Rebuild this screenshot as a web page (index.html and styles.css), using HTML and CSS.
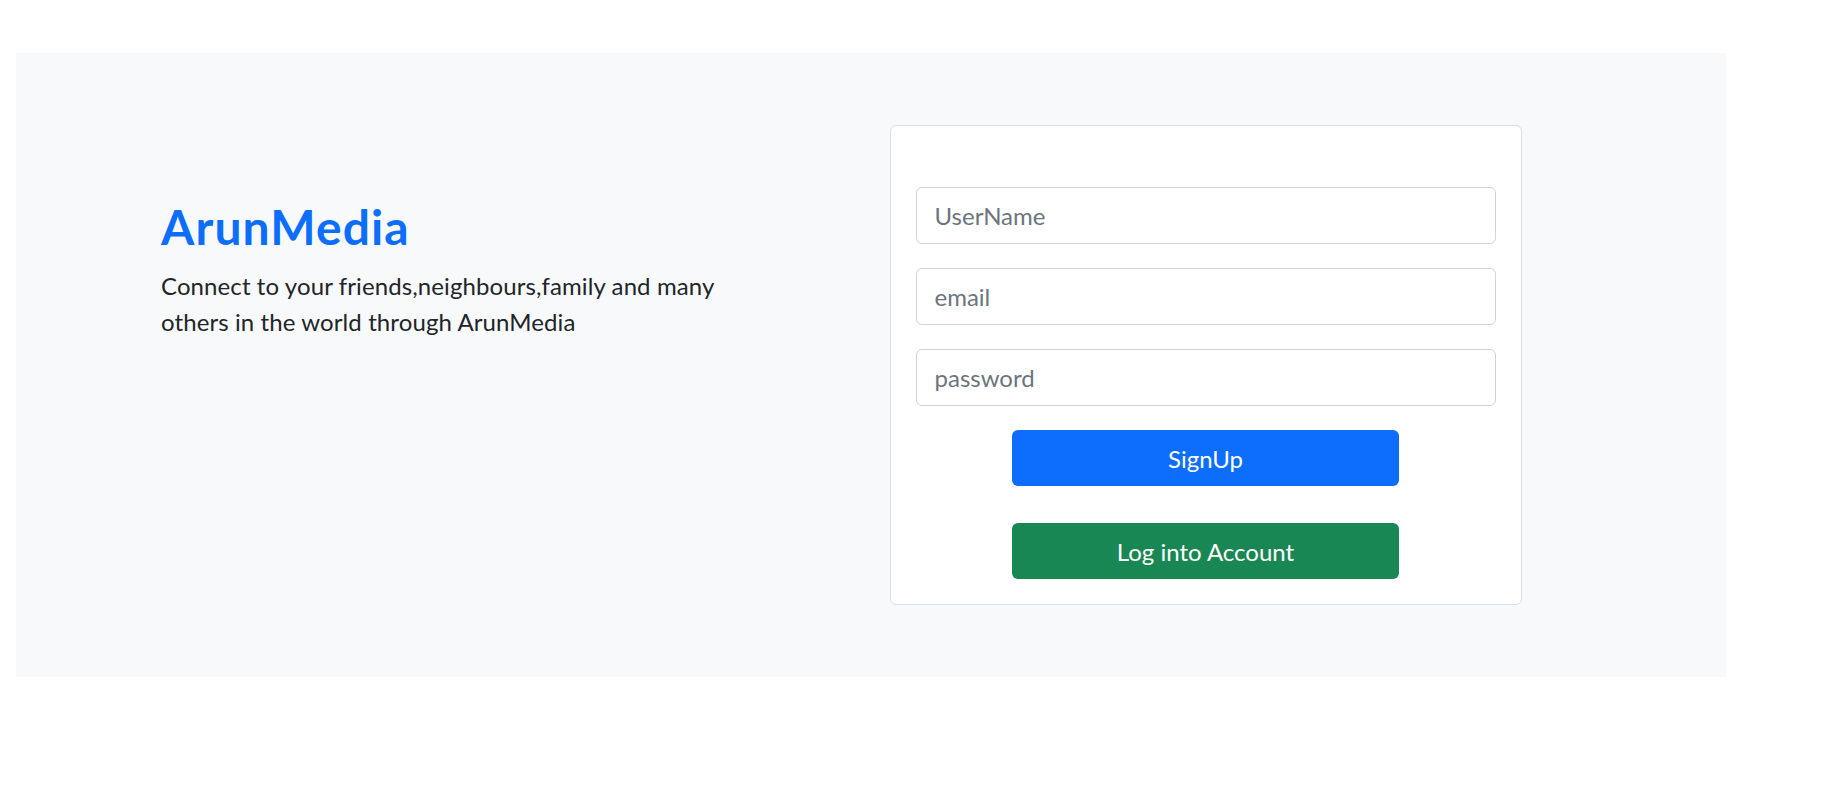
FILE: index.html
```html
<!DOCTYPE html>
<html lang="en">
<head>
<meta charset="utf-8">
<title>ArunMedia</title>
<link rel="stylesheet" href="styles.css">
</head>
<body>
<div class="page">
  <section class="panel">
    <div class="intro">
      <h2 class="brand">ArunMedia</h2>
      <p class="lead">Connect to your friends,neighbours,family and many others in the world through ArunMedia</p>
    </div>
    <form class="card">
      <input class="field" type="text" placeholder="UserName">
      <input class="field" type="email" placeholder="email">
      <input class="field" type="password" placeholder="password">
      <button class="btn btn-primary" type="button">SignUp</button>
      <button class="btn btn-success" type="button">Log into Account</button>
    </form>
  </section>
</div>
</body>
</html>
```

FILE: styles.css
```css
* { box-sizing: border-box; }

body {
  margin: 0;
  background: #ffffff;
  font-family: "Lato", "Noto Sans", sans-serif;
  color: #212529;
}

.page {
  padding: 53px 0 0 16px;
}

.panel {
  width: 1710px;
  background: #f8f9fa;
  padding: 72px 0;
  display: flex;
  align-items: flex-start;
}

.intro {
  width: 873.5px;
  padding: 73px 0 0 145px;
}

.brand {
  margin: 0 0 12px;
  font-size: 48px;
  line-height: 1.2;
  font-weight: 700;
  letter-spacing: 1.1px;
  color: #0d6efd;
}

.lead {
  margin: 0;
  width: 600px;
  font-size: 24px;
  line-height: 36px;
  letter-spacing: 0.1px;
  color: #212529;
}

.card {
  width: 632px;
  background: #ffffff;
  border: 1px solid #dcdee0;
  border-radius: 6px;
  padding: 61px 25px 25px;
  display: flex;
  flex-direction: column;
  align-items: center;
  margin: 0;
}

.field {
  width: 100%;
  height: 57px;
  margin: 0 0 24px;
  padding: 0 18px;
  border: 1px solid #cfd4d9;
  border-radius: 6px;
  background: #ffffff;
  font-family: inherit;
  font-size: 24px;
  color: #212529;
  outline: none;
}

.field::placeholder {
  color: #6c757d;
  opacity: 1;
}

.btn {
  width: 387px;
  height: 56px;
  border: none;
  border-radius: 6px;
  font-family: inherit;
  font-size: 24px;
  color: #ffffff;
  cursor: pointer;
}

.btn-primary {
  background: #0d6efd;
  margin-bottom: 37px;
}

.btn-success {
  background: #198754;
}
```
